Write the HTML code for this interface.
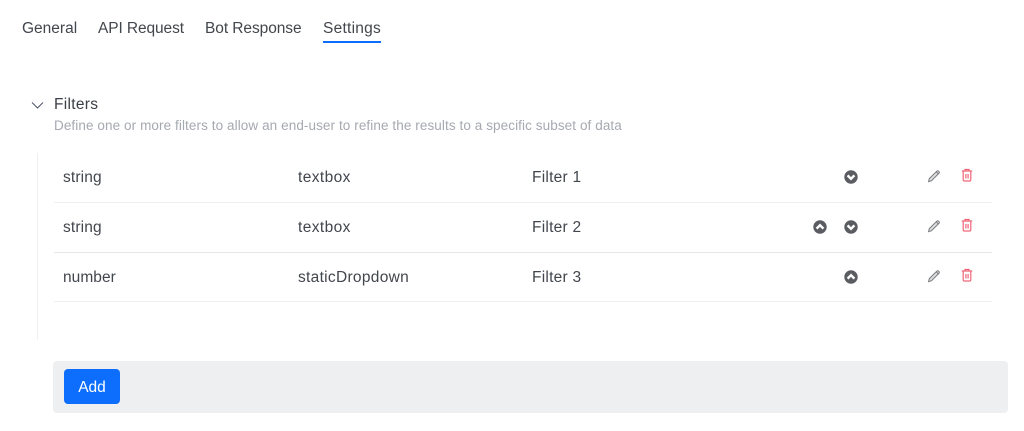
<!DOCTYPE html>
<html>
<head>
<meta charset="utf-8">
<style>
html,body{margin:0;padding:0;background:#fff}
body{width:1024px;height:431px;position:relative;overflow:hidden;font-family:"Liberation Sans",sans-serif;color:#42464d}
.t{position:absolute;white-space:nowrap;line-height:20px;font-size:15.5px;letter-spacing:0}
.c{position:absolute;width:14px;height:14px}
.i{position:absolute;width:16px;height:16px}
.l{position:absolute;height:1px;left:54px;width:938px;background:#eff0f2}
</style>
</head>
<body>
<div class="t" style="left:22px;top:19px">General</div>
<div class="t" style="left:98px;top:19px;letter-spacing:-.1px">API Request</div>
<div class="t" style="left:205px;top:19px;letter-spacing:-.07px">Bot Response</div>
<div class="t" style="left:323px;top:19px;letter-spacing:.25px">Settings</div>
<div style="position:absolute;left:323px;top:41px;width:58px;height:2px;background:#0d6efd"></div>

<svg style="position:absolute;left:31px;top:100px" width="13" height="11" viewBox="0 0 13 11"><path d="M1 2.5l5.5 5.5L12 2.5" fill="none" stroke="#4a5568" stroke-width="1"/></svg>
<div class="t" style="left:54px;top:95px;letter-spacing:.3px;color:#3a3e45">Filters</div>
<div class="t" style="left:54px;top:116px;font-size:13.5px;letter-spacing:.09px;color:#a5a9b0">Define one or more filters to allow an end-user to refine the results to a specific subset of data</div>

<div style="position:absolute;left:37px;top:153px;width:1px;height:187px;background:#eff0f2"></div>

<div class="t" style="left:63px;top:168px;letter-spacing:.15px">string</div>
<div class="t" style="left:298px;top:168px;letter-spacing:.4px">textbox</div>
<div class="t" style="left:532px;top:168px;letter-spacing:.25px">Filter 1</div>
<div class="l" style="top:202px"></div>

<div class="t" style="left:63px;top:218px;letter-spacing:.15px">string</div>
<div class="t" style="left:298px;top:218px;letter-spacing:.4px">textbox</div>
<div class="t" style="left:532px;top:218px;letter-spacing:.25px">Filter 2</div>
<div class="l" style="top:252px;background:#e6e7e9"></div>

<div class="t" style="left:63px;top:268px;letter-spacing:.05px">number</div>
<div class="t" style="left:298px;top:268px;letter-spacing:.3px">staticDropdown</div>
<div class="t" style="left:532px;top:268px;letter-spacing:.25px">Filter 3</div>
<div class="l" style="top:301px"></div>

<svg class="c" style="left:844px;top:170px" viewBox="0 0 14 14"><circle cx="7" cy="7" r="6.7" fill="#5a5c61"/><path d="M3.6 5.4L7 8.8l3.4-3.4" fill="none" stroke="#fff" stroke-width="2.4"/></svg>
<svg class="c" style="left:813px;top:220px" viewBox="0 0 14 14"><circle cx="7" cy="7" r="6.7" fill="#5a5c61"/><path d="M3.6 8.6L7 5.2l3.4 3.4" fill="none" stroke="#fff" stroke-width="2.4"/></svg>
<svg class="c" style="left:844px;top:220px" viewBox="0 0 14 14"><circle cx="7" cy="7" r="6.7" fill="#5a5c61"/><path d="M3.6 5.4L7 8.8l3.4-3.4" fill="none" stroke="#fff" stroke-width="2.4"/></svg>
<svg class="c" style="left:844px;top:270px" viewBox="0 0 14 14"><circle cx="7" cy="7" r="6.7" fill="#5a5c61"/><path d="M3.6 8.6L7 5.2l3.4 3.4" fill="none" stroke="#fff" stroke-width="2.4"/></svg>

<svg class="i" style="left:926px;top:168px" viewBox="0 0 16 16"><path d="M2.6 13.6l.7-2.9 7.6-7.6a1 1 0 0 1 1.5 0l.6.6a1 1 0 0 1 0 1.5l-7.6 7.6z" fill="#e2e3e4" stroke="#7f8185" stroke-width="1.1"/><path d="M10.2 3.8l2.2 2.2" fill="none" stroke="#7f8185" stroke-width="1.1"/></svg>
<svg class="i" style="left:926px;top:218px" viewBox="0 0 16 16"><path d="M2.6 13.6l.7-2.9 7.6-7.6a1 1 0 0 1 1.5 0l.6.6a1 1 0 0 1 0 1.5l-7.6 7.6z" fill="#e2e3e4" stroke="#7f8185" stroke-width="1.1"/><path d="M10.2 3.8l2.2 2.2" fill="none" stroke="#7f8185" stroke-width="1.1"/></svg>
<svg class="i" style="left:926px;top:268px" viewBox="0 0 16 16"><path d="M2.6 13.6l.7-2.9 7.6-7.6a1 1 0 0 1 1.5 0l.6.6a1 1 0 0 1 0 1.5l-7.6 7.6z" fill="#e2e3e4" stroke="#7f8185" stroke-width="1.1"/><path d="M10.2 3.8l2.2 2.2" fill="none" stroke="#7f8185" stroke-width="1.1"/></svg>

<svg class="i" style="left:959px;top:167px" viewBox="0 0 16 16"><path d="M2.8 4h10.4M6 4V2.5h4V4M4.2 4v8.6c0 .9.5 1.4 1.3 1.4h5c.8 0 1.3-.5 1.3-1.4V4M6.9 7v4.5M9.1 7v4.5" fill="none" stroke="#ee6676" stroke-width="1.2"/></svg>
<svg class="i" style="left:959px;top:217px" viewBox="0 0 16 16"><path d="M2.8 4h10.4M6 4V2.5h4V4M4.2 4v8.6c0 .9.5 1.4 1.3 1.4h5c.8 0 1.3-.5 1.3-1.4V4M6.9 7v4.5M9.1 7v4.5" fill="none" stroke="#ee6676" stroke-width="1.2"/></svg>
<svg class="i" style="left:959px;top:267px" viewBox="0 0 16 16"><path d="M2.8 4h10.4M6 4V2.5h4V4M4.2 4v8.6c0 .9.5 1.4 1.3 1.4h5c.8 0 1.3-.5 1.3-1.4V4M6.9 7v4.5M9.1 7v4.5" fill="none" stroke="#ee6676" stroke-width="1.2"/></svg>

<div style="position:absolute;left:53px;top:361px;width:955px;height:52px;background:#eeeff1;border-radius:4px"></div>
<div style="position:absolute;left:64px;top:369px;width:56px;height:35px;background:#0d6efd;border-radius:4px;color:#fff;font-size:15.5px;line-height:37px;text-align:center">Add</div>
</body>
</html>
